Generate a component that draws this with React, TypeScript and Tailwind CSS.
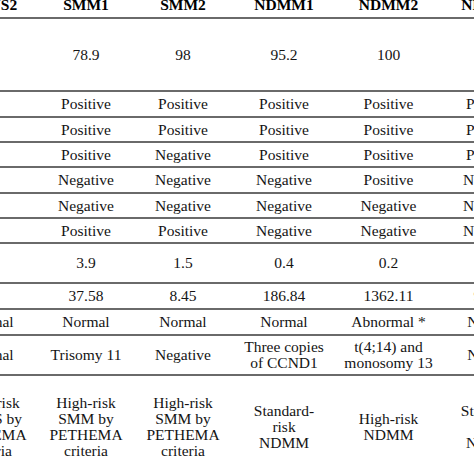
import React from 'react';

type Row = { h: string; cells: React.ReactNode[] };

const COLS = 'grid grid-cols-[96px_96px_98px_104px_105px_100px]';

const HEADERS = ['MGUS2', 'SMM1', 'SMM2', 'NDMM1', 'NDMM2', 'NDMM3'];

const ROWS: Row[] = [
  { h: 'h-[73px]', cells: ['', '78.9', '98', '95.2', '100', '90'] },
  { h: 'h-[26px]', cells: ['', 'Positive', 'Positive', 'Positive', 'Positive', 'Positive'] },
  { h: 'h-[25px]', cells: ['', 'Positive', 'Positive', 'Positive', 'Positive', 'Positive'] },
  { h: 'h-[25px]', cells: ['', 'Positive', 'Negative', 'Positive', 'Positive', 'Positive'] },
  { h: 'h-[26px]', cells: ['', 'Negative', 'Negative', 'Negative', 'Positive', 'Negative'] },
  { h: 'h-[25px]', cells: ['', 'Negative', 'Negative', 'Negative', 'Negative', 'Negative'] },
  { h: 'h-[25px]', cells: ['', 'Positive', 'Positive', 'Negative', 'Negative', 'Negative'] },
  { h: 'h-[40px]', cells: ['', '3.9', '1.5', '0.4', '0.2', '1.2'] },
  { h: 'h-[26px]', cells: ['', '37.58', '8.45', '186.84', '1362.11', '98.12'] },
  { h: 'h-[26px]', cells: ['Normal', 'Normal', 'Normal', 'Normal', 'Abnormal *', 'Normal'] },
  {
    h: 'h-[40px]',
    cells: [
      'Normal',
      'Trisomy 11',
      'Negative',
      <>Three copies<br />of CCND1</>,
      <>t(4;14) and<br />monosomy 13</>,
      'Normal',
    ],
  },
  {
    h: 'h-[104px]',
    cells: [
      <>High-risk<br />MGUS by<br />PETHEMA<br />criteria</>,
      <>High-risk<br />SMM by<br />PETHEMA<br />criteria</>,
      <>High-risk<br />SMM by<br />PETHEMA<br />criteria</>,
      <>Standard-<br />risk<br />NDMM</>,
      <>High-risk<br />NDMM</>,
      <>Standard-<br />risk<br />NDMM</>,
    ],
  },
];

export default function App() {
  return (
    <div className="w-[474px] h-[474px] overflow-hidden bg-white [font-family:'Liberation_Serif',serif] text-[15.5px] leading-[16px] text-[#141414]">
      <div className="w-[599px] ml-[-58px] mt-[-8px]">
        {/* header row */}
        <div className={`${COLS} h-[25px] items-center text-center font-bold text-black`}>
          {HEADERS.map((h) => (
            <div key={h}>{h}</div>
          ))}
        </div>

        {ROWS.map((row, i) => (
          <div
            key={i}
            className={`${COLS} ${row.h} items-center text-center border-t-2 border-[#6a6a6a]`}
          >
            {row.cells.map((c, j) => (
              <div key={j}>{c}</div>
            ))}
          </div>
        ))}
      </div>
    </div>
  );
}
